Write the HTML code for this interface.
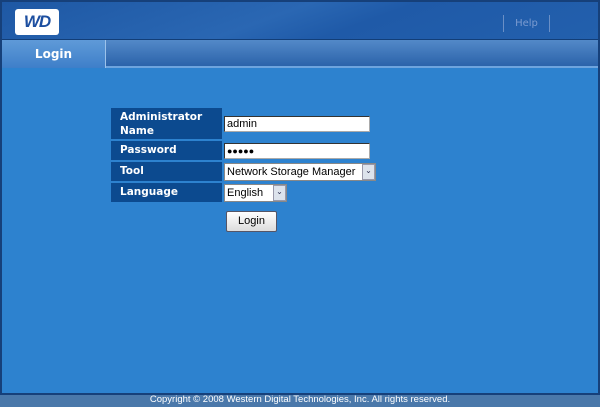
<!DOCTYPE html>
<html><head><style>
body{margin:0;width:600px;height:407px;overflow:hidden;background:#4a78aa;font-family:"DejaVu Sans","Liberation Sans",sans-serif;position:relative}
.main{position:absolute;left:0;top:0;width:596px;height:391px;border:2px solid #16407a;background:#2d82cf;}
.hdr{position:absolute;left:0;top:0;width:596px;height:37px;background:linear-gradient(160deg,#1e58a4 0%,#2a67b3 45%,#1f5aa8 60%,#2360ad 100%);border-bottom:1px solid #123e78}
.logo{position:absolute;left:13px;top:7px;width:44px;height:26px;background:#fff;border-radius:3px;color:#1d4fa0;font:italic bold 17px "Liberation Sans",sans-serif;text-align:center;line-height:26px;letter-spacing:-1px}
.help{position:absolute;left:501px;top:13px;width:45px;height:17px;border-left:1px solid #6a8fc6;border-right:1px solid #6a8fc6;color:#7b9bd0;font-size:10px;text-align:center;line-height:17px}
.bar{position:absolute;left:0;top:38px;width:596px;height:26px;background:linear-gradient(#5389c8,#2b63aa);border-bottom:2px solid #6ea4de}
.tab{position:absolute;left:0;top:38px;width:103px;height:28px;background:linear-gradient(#5f9ad8,#3e7fc9);border-right:1px solid #9cc2ea;color:#fff;font-weight:bold;font-size:12px;text-align:center;line-height:28px}
.lbl{position:absolute;left:109px;width:111px;background:#0c4a8f;color:#fff;font-weight:bold;font-size:10.5px;padding-left:9px;box-sizing:border-box}
.inp{position:absolute;left:222px;width:142px;height:14px;background:#fff;border:1px solid #333;border-right-color:#aaa;border-bottom-color:#aaa;font:11px/14px "Liberation Sans",sans-serif;padding-left:2px}
.sel{position:absolute;left:222px;height:16px;background:#fff;font:11px/16px "Liberation Sans",sans-serif;padding-left:2px;border:1px solid #888;white-space:nowrap;overflow:hidden}
.arr{position:absolute;right:0;top:0;width:11px;height:14px;background:#dde3ec;border:1px solid #99a;font-size:8px;text-align:center;line-height:12px;color:#335}
.btn{position:absolute;left:224px;top:209px;width:49px;height:19px;background:linear-gradient(#fff,#dcdcdc);border:1px solid #556;border-radius:2px;font:11px/19px "Liberation Sans",sans-serif;text-align:center}
.foot{position:absolute;left:0;top:393px;width:600px;text-align:center;color:#fff;font:9.5px/14px "Liberation Sans",sans-serif}
</style></head><body>
<div class="main">
<div class="hdr"><div class="logo">WD</div><div class="help">Help</div></div>
<div class="bar"></div><div class="tab">Login</div>
<div class="lbl" style="top:106px;height:31px;padding-top:2px;line-height:14px">Administrator<br>Name</div>
<div class="lbl" style="top:139px;height:19px;line-height:19px">Password</div>
<div class="lbl" style="top:160px;height:19px;line-height:19px">Tool</div>
<div class="lbl" style="top:181px;height:19px;line-height:19px">Language</div>
<div class="inp" style="top:114px">admin</div>
<div class="inp" style="top:141px;font-size:9px;letter-spacing:0">●●●●●</div>
<div class="sel" style="top:161px;width:148px">Network Storage Manager<div class="arr">⌄</div></div>
<div class="sel" style="top:182px;width:59px">English<div class="arr">⌄</div></div>
<div class="btn">Login</div>
</div>
<div class="foot">Copyright © 2008 Western Digital Technologies, Inc. All rights reserved.</div>
</body></html>
